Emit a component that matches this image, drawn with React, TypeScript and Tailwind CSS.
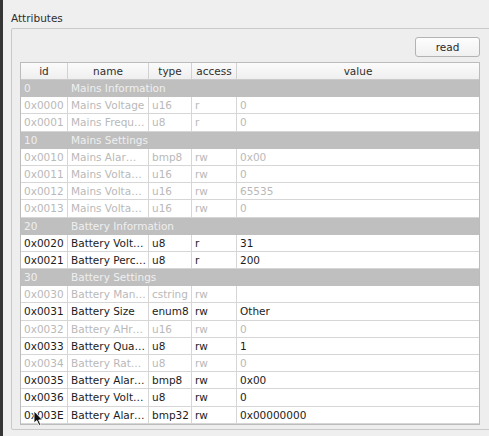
import React from 'react'

type Row =
    | { kind: 'group'; id: string; name: string }
    | { kind: 'attr'; id: string; name: string; type: string; access: string; value: string; enabled: boolean }

const rows: Row[] = [
    { kind: 'group', id: '0', name: 'Mains Information' },
    { kind: 'attr', id: '0x0000', name: 'Mains Voltage', type: 'u16', access: 'r', value: '0', enabled: false },
    { kind: 'attr', id: '0x0001', name: 'Mains Frequ…', type: 'u8', access: 'r', value: '0', enabled: false },
    { kind: 'group', id: '10', name: 'Mains Settings' },
    { kind: 'attr', id: '0x0010', name: 'Mains Alar…', type: 'bmp8', access: 'rw', value: '0x00', enabled: false },
    { kind: 'attr', id: '0x0011', name: 'Mains Volta…', type: 'u16', access: 'rw', value: '0', enabled: false },
    { kind: 'attr', id: '0x0012', name: 'Mains Volta…', type: 'u16', access: 'rw', value: '65535', enabled: false },
    { kind: 'attr', id: '0x0013', name: 'Mains Volta…', type: 'u16', access: 'rw', value: '0', enabled: false },
    { kind: 'group', id: '20', name: 'Battery Information' },
    { kind: 'attr', id: '0x0020', name: 'Battery Volt…', type: 'u8', access: 'r', value: '31', enabled: true },
    { kind: 'attr', id: '0x0021', name: 'Battery Perc…', type: 'u8', access: 'r', value: '200', enabled: true },
    { kind: 'group', id: '30', name: 'Battery Settings' },
    { kind: 'attr', id: '0x0030', name: 'Battery Man…', type: 'cstring', access: 'rw', value: '', enabled: false },
    { kind: 'attr', id: '0x0031', name: 'Battery Size', type: 'enum8', access: 'rw', value: 'Other', enabled: true },
    { kind: 'attr', id: '0x0032', name: 'Battery AHr…', type: 'u16', access: 'rw', value: '0', enabled: false },
    { kind: 'attr', id: '0x0033', name: 'Battery Qua…', type: 'u8', access: 'rw', value: '1', enabled: true },
    { kind: 'attr', id: '0x0034', name: 'Battery Rat…', type: 'u8', access: 'rw', value: '0', enabled: false },
    { kind: 'attr', id: '0x0035', name: 'Battery Alar…', type: 'bmp8', access: 'rw', value: '0x00', enabled: true },
    { kind: 'attr', id: '0x0036', name: 'Battery Volt…', type: 'u8', access: 'rw', value: '0', enabled: true },
    { kind: 'attr', id: '0x003E', name: 'Battery Alar…', type: 'bmp32', access: 'rw', value: '0x00000000', enabled: true },
]

const cols = 'grid grid-cols-[47px_81px_43px_45px_1fr]'

const App = () => {
    return (
        <div className="w-[489px] h-[436px] overflow-hidden flex bg-[#efefef] text-[10.5px] text-[#2a2a2a] font-['DejaVu_Sans',sans-serif]">
            <div className="w-[3px] h-full bg-[#353535] shrink-0" />

            <div className="flex flex-col pl-[8px] pt-[11px]">
                <div className="h-[17px] leading-[14px] text-[#2e2e2e]">Attributes</div>

                <div className="w-[480px] h-[402px] border border-[#c9c9c9] rounded-[2px] bg-[#eeeeee] pl-[8px] pr-[10px] pt-[8px] flex flex-col">
                    <div className="flex justify-end h-[20px]">
                        <button className="w-[65px] h-[20px] border border-[#b3b3b3] rounded-[3px] bg-gradient-to-b from-[#fdfdfd] to-[#f0f0f0] text-[#2a2a2a] leading-[18px]">
                            read
                        </button>
                    </div>

                    <div className="mt-[5px] w-[460px] border border-[#bcbcbc] bg-white relative">
                        <div className={`${cols} h-[17px] bg-gradient-to-b from-[#fbfbfb] to-[#efefef] border-b border-[#cacaca] leading-[16px] text-[#2e2e2e]`}>
                            <div className="text-center border-r border-[#d2d2d2]">id</div>
                            <div className="text-center border-r border-[#d2d2d2]">name</div>
                            <div className="text-center border-r border-[#d2d2d2]">type</div>
                            <div className="text-center border-r border-[#d2d2d2]">access</div>
                            <div className="text-center">value</div>
                        </div>

                        {rows.map((row, i) =>
                            row.kind === 'group' ? (
                                <div key={i} className={`${cols} h-[17.2px] bg-[#bfbfbf] text-[#efefef] leading-[16px] border-b border-[#bfbfbf]`}>
                                    <div className="pl-[3px]">{row.id}</div>
                                    <div className="pl-[3px] col-span-4 whitespace-nowrap">{row.name}</div>
                                </div>
                            ) : (
                                <div
                                    key={i}
                                    className={`${cols} h-[17.2px] leading-[16px] border-b border-[#d6d6d6] whitespace-nowrap ${row.enabled ? 'text-[#1c1c1c]' : 'text-[#b9b9b9]'}`}
                                >
                                    <div className="pl-[3px] border-r border-[#d6d6d6]">{row.id}</div>
                                    <div className="pl-[3px] border-r border-[#d6d6d6] overflow-hidden">{row.name}</div>
                                    <div className="pl-[3px] border-r border-[#d6d6d6]">{row.type}</div>
                                    <div className="pl-[3px] border-r border-[#d6d6d6]">{row.access}</div>
                                    <div className="pl-[3px]">{row.value}</div>
                                </div>
                            )
                        )}

                        {/* mouse pointer over the last row */}
                        <svg className="absolute left-[12px] bottom-[-3px]" width="11" height="17" viewBox="0 0 11 17">
                            <path d="M1 1 L1 13 L3.8 10.6 L6 15.5 L7.8 14.7 L5.7 10 L9.5 10 Z" fill="#111" stroke="#fff" strokeWidth="0.9" strokeLinejoin="round" />
                        </svg>
                    </div>
                </div>
            </div>
        </div>
    )
}

export default App
